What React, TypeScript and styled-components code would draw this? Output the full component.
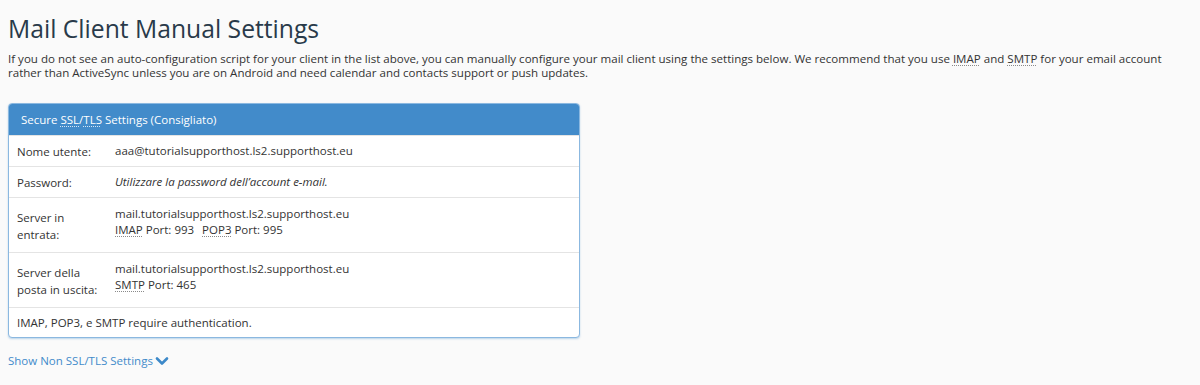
import React from "react";
import styled, { createGlobalStyle } from "styled-components";

const Global = createGlobalStyle`
  html, body {
    margin: 0;
    padding: 0;
    background: #fafafa;
  }
  body {
    font-family: "Open Sans", "Liberation Sans", sans-serif;
    color: #333;
  }
`;

const App = () => {
  return (
    <Page>
      <Global />
      <Title>Mail Client Manual Settings</Title>
      <Intro>
        If you do not see an auto-configuration script for your client in the
        list above, you can manually configure your mail client using the
        settings below. We recommend that you use <Abbr>IMAP</Abbr> and{" "}
        <Abbr>SMTP</Abbr> for your email account rather than ActiveSync unless
        you are on Android and need calendar and contacts support or push
        updates.
      </Intro>
      <Panel>
        <PanelHead>
          Secure <Abbr>SSL</Abbr>/<Abbr>TLS</Abbr> Settings (Consigliato)
        </PanelHead>
        <Row>
          <Label>Nome utente:</Label>
          <Value>aaa@tutorialsupporthost.ls2.supporthost.eu</Value>
        </Row>
        <Row>
          <Label>Password:</Label>
          <Value italic>Utilizzare la password dell’account e-mail.</Value>
        </Row>
        <Row>
          <Label>
            Server in
            <br />
            entrata:
          </Label>
          <Value multi>
            mail.tutorialsupporthost.ls2.supporthost.eu
            <br />
            <Abbr>IMAP</Abbr> Port: 993
            <Spacer />
            <Abbr>POP3</Abbr> Port: 995
          </Value>
        </Row>
        <Row>
          <Label>
            Server della
            <br />
            posta in uscita:
          </Label>
          <Value multi>
            mail.tutorialsupporthost.ls2.supporthost.eu
            <br />
            <Abbr>SMTP</Abbr> Port: 465
          </Value>
        </Row>
        <Footer>IMAP, POP3, e SMTP require authentication.</Footer>
      </Panel>
      <Toggle href="#">
        Show Non SSL/TLS Settings
        <svg width="14" height="10" viewBox="0 0 14 10">
          <path
            d="M2 2.5 L7 7.5 L12 2.5"
            fill="none"
            stroke="#3d89c9"
            strokeWidth="2.6"
            strokeLinecap="round"
            strokeLinejoin="round"
          />
        </svg>
      </Toggle>
    </Page>
  );
};

export default App;

const Page = styled.div`
  padding: 12px 8px 20px 8px;
  width: 1200px;
  box-sizing: border-box;
`;

const Title = styled.h1`
  margin: 0;
  font-size: 24.7px;
  font-weight: 400;
  line-height: 34px;
  color: #293a4a;
`;

const Intro = styled.p`
  margin: 6px 0 0 0;
  max-width: 1160px;
  font-size: 11.55px;
  line-height: 14px;
  color: #333;
`;

const Abbr = styled.abbr`
  text-decoration: underline dotted #8a8a8a;
  text-decoration-thickness: 1px;
  text-underline-offset: 2px;
  cursor: help;
`;

const Panel = styled.div`
  margin-top: 23px;
  width: 570px;
  border: 1px solid #8bb8e0;
  border-radius: 4px;
  background: #fff;
  overflow: hidden;
  box-shadow: 0 1px 2px rgba(66, 139, 202, 0.35);
`;

const PanelHead = styled.div`
  background: #428bca;
  color: #fff;
  font-size: 11.5px;
  padding: 8px 12px;
  line-height: 15px;
  height: 15px;

  abbr {
    text-decoration-color: #d6e6f4;
  }
`;

const Row = styled.div`
  display: flex;
  align-items: center;
  border-top: 1px solid #e4e4e4;
  padding: 7px 8px 6px 8px;
  font-size: 11.5px;
  line-height: 16px;
`;

const Label = styled.div`
  width: 98px;
  flex: none;
  color: #333;
  line-height: 17px;
`;

const Value = styled.div<{ italic?: boolean; multi?: boolean }>`
  align-self: flex-start;
  color: #333;
  font-style: ${(p) => (p.italic ? "italic" : "normal")};
  padding-top: ${(p) => (p.multi ? "1px" : "0")};
  padding-bottom: ${(p) => (p.multi ? "8px" : "0")};
`;

const Spacer = styled.span`
  display: inline-block;
  width: 8px;
`;

const Footer = styled.div`
  border-top: 1px solid #e4e4e4;
  padding: 7px 8px 6px 8px;
  font-size: 11.5px;
  line-height: 16px;
`;

const Toggle = styled.a`
  display: inline-flex;
  align-items: center;
  gap: 2px;
  margin-top: 15px;
  font-size: 11.5px;
  color: #428bca;
  text-decoration: none;
`;
